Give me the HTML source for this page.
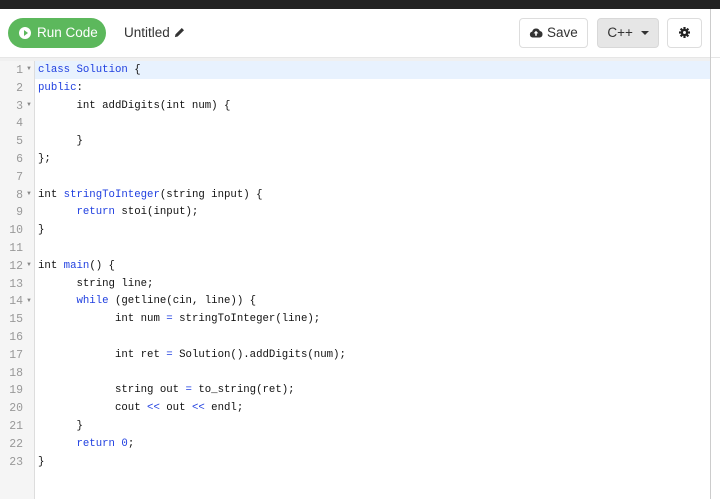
<!DOCTYPE html>
<html><head><style>
*{margin:0;padding:0;box-sizing:border-box}
body{width:720px;height:499px;overflow:hidden;background:#fff;font-family:"Liberation Sans",sans-serif;position:relative}
.top{position:absolute;left:0;top:0;width:720px;height:9px;background:#222}
.hdr{position:absolute;left:0;top:9px;width:720px;height:49px;background:#fff;border-bottom:1px solid #e6e6e6}
.run{position:absolute;left:8px;top:18px;width:98px;height:30px;border-radius:15px;background:#5cb85c;color:#fff;font-size:13.5px;line-height:30px;padding-left:29px}
.run .ic{position:absolute;left:11px;top:9px;width:12px;height:12px;border-radius:50%;background:#fff}
.run .ic:after{content:"";position:absolute;left:4.5px;top:3px;border-left:4px solid #5cb85c;border-top:3px solid transparent;border-bottom:3px solid transparent}
.title{position:absolute;left:124px;top:25px;font-size:13.5px;color:#333}
.btn{position:absolute;top:18px;height:30px;border:1px solid #ddd;border-radius:4px;background:#fff;font-size:13.5px;color:#333;line-height:28px;text-align:center}
.sep{position:absolute;left:0;top:58px;width:710px;height:3px;background:#f0f0f0}
.gut{position:absolute;left:0;top:61px;width:35px;height:438px;background:#f5f5f5;border-right:1px solid #ddd}
.hl{position:absolute;left:35px;top:61px;width:675px;height:18px;background:#e8f2fe}
.vline{position:absolute;left:710px;top:9px;width:1px;height:490px;background:#ccc}
.nums{position:absolute;left:0;top:62px;width:23px;text-align:right;font-family:"Liberation Mono",monospace;font-size:11.5px;line-height:17.8px;color:#999}
.fold{position:absolute;left:26px;font-size:6px;color:#888}
pre{position:absolute;left:38px;top:62px;font-family:"Liberation Mono",monospace;font-size:10.7px;line-height:17.8px;color:#111}
.k{color:#1f3fe0}
</style></head><body>
<div class="top"></div>
<div class="hdr"></div>
<div class="run"><span class="ic"></span>Run Code</div>
<div class="title">Untitled <svg width="11" height="11" viewBox="0 0 12 12" style="vertical-align:-1px"><path d="M1 11l0.6-3L8.5 1.1l2.4 2.4L4 10.4z" fill="#333"/></svg></div>
<div class="btn" style="left:519px;width:69px"><svg width="14" height="11" viewBox="0 0 14 11" style="vertical-align:-1px"><path d="M3.5 10.5A3 3 0 0 1 3.2 4.6A4 4 0 0 1 10.8 4A3.3 3.3 0 0 1 10.8 10.5z" fill="#333"/><path d="M7 3.8l-2.4 2.6h1.6v2.4h1.6V6.4h1.6z" fill="#fff"/></svg> Save</div>
<div class="btn" style="left:597px;width:62px;background:#e6e6e6;border-color:#d8d8d8">C++ <span style="display:inline-block;border-top:4px solid #333;border-left:4px solid transparent;border-right:4px solid transparent;vertical-align:2px;margin-left:4px"></span></div>
<div class="btn" style="left:667px;width:35px"><svg width="11" height="11" viewBox="0 0 12 12" style="vertical-align:-1px"><g fill="#222"><circle cx="6" cy="6" r="4"/><rect x="4.8" y="0" width="2.4" height="12"/><rect x="0" y="4.8" width="12" height="2.4"/><rect x="4.8" y="0" width="2.4" height="12" transform="rotate(45 6 6)"/><rect x="4.8" y="0" width="2.4" height="12" transform="rotate(-45 6 6)"/></g><circle cx="6" cy="6" r="1.6" fill="#fff"/></svg></div>
<div class="sep"></div>
<div class="gut"></div>
<div class="hl"></div>
<div class="vline"></div>
<div class="nums">1<br>2<br>3<br>4<br>5<br>6<br>7<br>8<br>9<br>10<br>11<br>12<br>13<br>14<br>15<br>16<br>17<br>18<br>19<br>20<br>21<br>22<br>23</div>
<span class="fold" style="top:66px">▼</span><span class="fold" style="top:102px">▼</span><span class="fold" style="top:191px">▼</span><span class="fold" style="top:262px">▼</span><span class="fold" style="top:298px">▼</span>
<pre><span class="k">class</span> <span class="k">Solution</span> {
<span class="k">public</span>:
      int addDigits(int num) {

      }
};

int <span class="k">stringToInteger</span>(string input) {
      <span class="k">return</span> stoi(input);
}

int <span class="k">main</span>() {
      string line;
      <span class="k">while</span> (getline(cin, line)) {
            int num <span class="k">=</span> stringToInteger(line);

            int ret <span class="k">=</span> Solution().addDigits(num);

            string out <span class="k">=</span> to_string(ret);
            cout <span class="k">&lt;&lt;</span> out <span class="k">&lt;&lt;</span> endl;
      }
      <span class="k">return</span> <span class="k">0</span>;
}</pre>
</body></html>
